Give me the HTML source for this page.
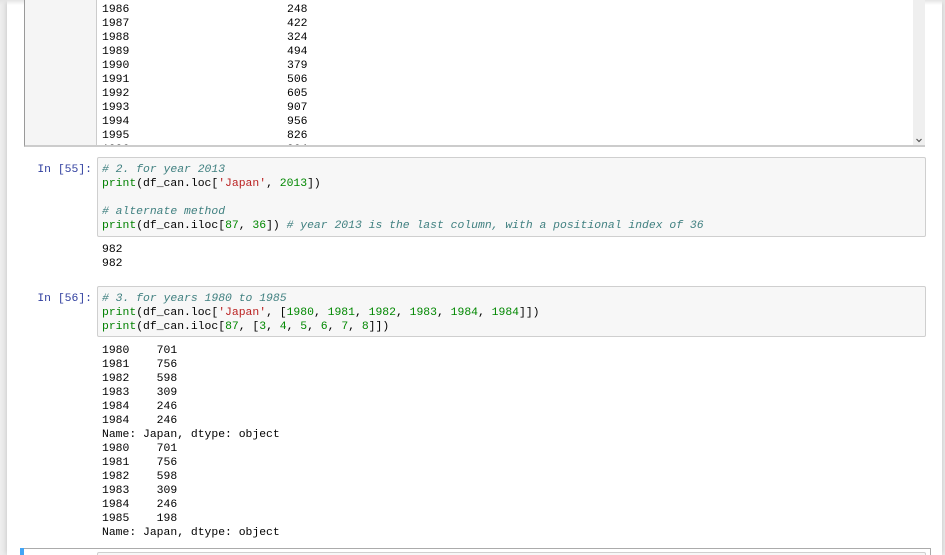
<!DOCTYPE html>
<html><head><style>
html,body{margin:0;width:945px;height:555px;overflow:hidden}
body{background:#eee;position:relative;font-family:"Liberation Mono",monospace;font-size:11.4px;color:#000}
.nb{position:absolute;left:7px;top:0;width:935px;height:555px;background:#fff;box-shadow:0 0 6px rgba(0,0,0,.2)}
.top{position:absolute;left:0;top:0;width:945px;height:5px;background:linear-gradient(#e4e4e4,#fff0)}
.l{position:absolute;white-space:pre;line-height:14px}
.c{color:#408080;font-style:italic}
.s{color:#ba2121}
.n{color:#080}
.k{color:#008000}
.box{position:absolute;background:#f7f7f7;border:1px solid #cfcfcf;border-radius:2px}
.pr{position:absolute;color:#303f9f;text-align:right;width:80px;left:12px;white-space:pre}
</style></head><body>
<div class="nb"></div>
<div class="top"></div>
<div style="position:absolute;left:24px;top:0;width:900px;height:145px;border-left:1px solid #999;border-bottom:2px solid #ccc;overflow:hidden;background:#fff">
 <div style="position:absolute;left:0;top:0;width:71px;height:145px;background:#f5f5f5;border-right:1px solid #ccc"></div>
 <div style="position:absolute;right:0;top:0;width:12px;height:145px;background:#efefef"></div>
 <svg style="position:absolute;right:3px;top:138px" width="6" height="5"><path d="M0.5 1 L3 3.5 L5.5 1" stroke="#555" stroke-width="1.2" fill="none"/></svg>
 <div class="l" style="left:77px;top:3px">1986
1987
1988
1989
1990
1991
1992
1993
1994
1995
1996</div>
 <div class="l" style="left:262px;top:3px">248
422
324
494
379
506
605
907
956
826
904</div>
</div>
<div class="pr" style="top:163px;line-height:14px">In [55]:</div>
<div class="box" style="left:97px;top:157px;width:827px;height:78px"></div>
<div class="l" style="left:102px;top:163px"><span class="c"># 2. for year 2013</span>
<span class="k">print</span>(df_can.loc[<span class="s">'Japan'</span>, <span class="n">2013</span>])

<span class="c"># alternate method</span>
<span class="k">print</span>(df_can.iloc[<span class="n">87</span>, <span class="n">36</span>]) <span class="c"># year 2013 is the last column, with a positional index of 36</span></div>
<div class="l" style="left:102px;top:243px">982
982</div>
<div class="pr" style="top:292px;line-height:14px">In [56]:</div>
<div class="box" style="left:97px;top:286px;width:827px;height:49px"></div>
<div class="l" style="left:102px;top:292px"><span class="c"># 3. for years 1980 to 1985</span>
<span class="k">print</span>(df_can.loc[<span class="s">'Japan'</span>, [<span class="n">1980</span>, <span class="n">1981</span>, <span class="n">1982</span>, <span class="n">1983</span>, <span class="n">1984</span>, <span class="n">1984</span>]])
<span class="k">print</span>(df_can.iloc[<span class="n">87</span>, [<span class="n">3</span>, <span class="n">4</span>, <span class="n">5</span>, <span class="n">6</span>, <span class="n">7</span>, <span class="n">8</span>]])</div>
<div class="l" style="left:102px;top:344px">1980    701
1981    756
1982    598
1983    309
1984    246
1984    246
Name: Japan, dtype: object
1980    701
1981    756
1982    598
1983    309
1984    246
1985    198
Name: Japan, dtype: object</div>
<div style="position:absolute;left:20px;top:548px;width:910px;height:10px;border-top:1px solid #ababab;border-right:1px solid #ababab"></div>
<div style="position:absolute;left:20px;top:548px;width:4px;height:10px;background:#42a5f5"></div>
<div class="box" style="left:97px;top:552px;width:827px;height:10px"></div>
</body></html>
